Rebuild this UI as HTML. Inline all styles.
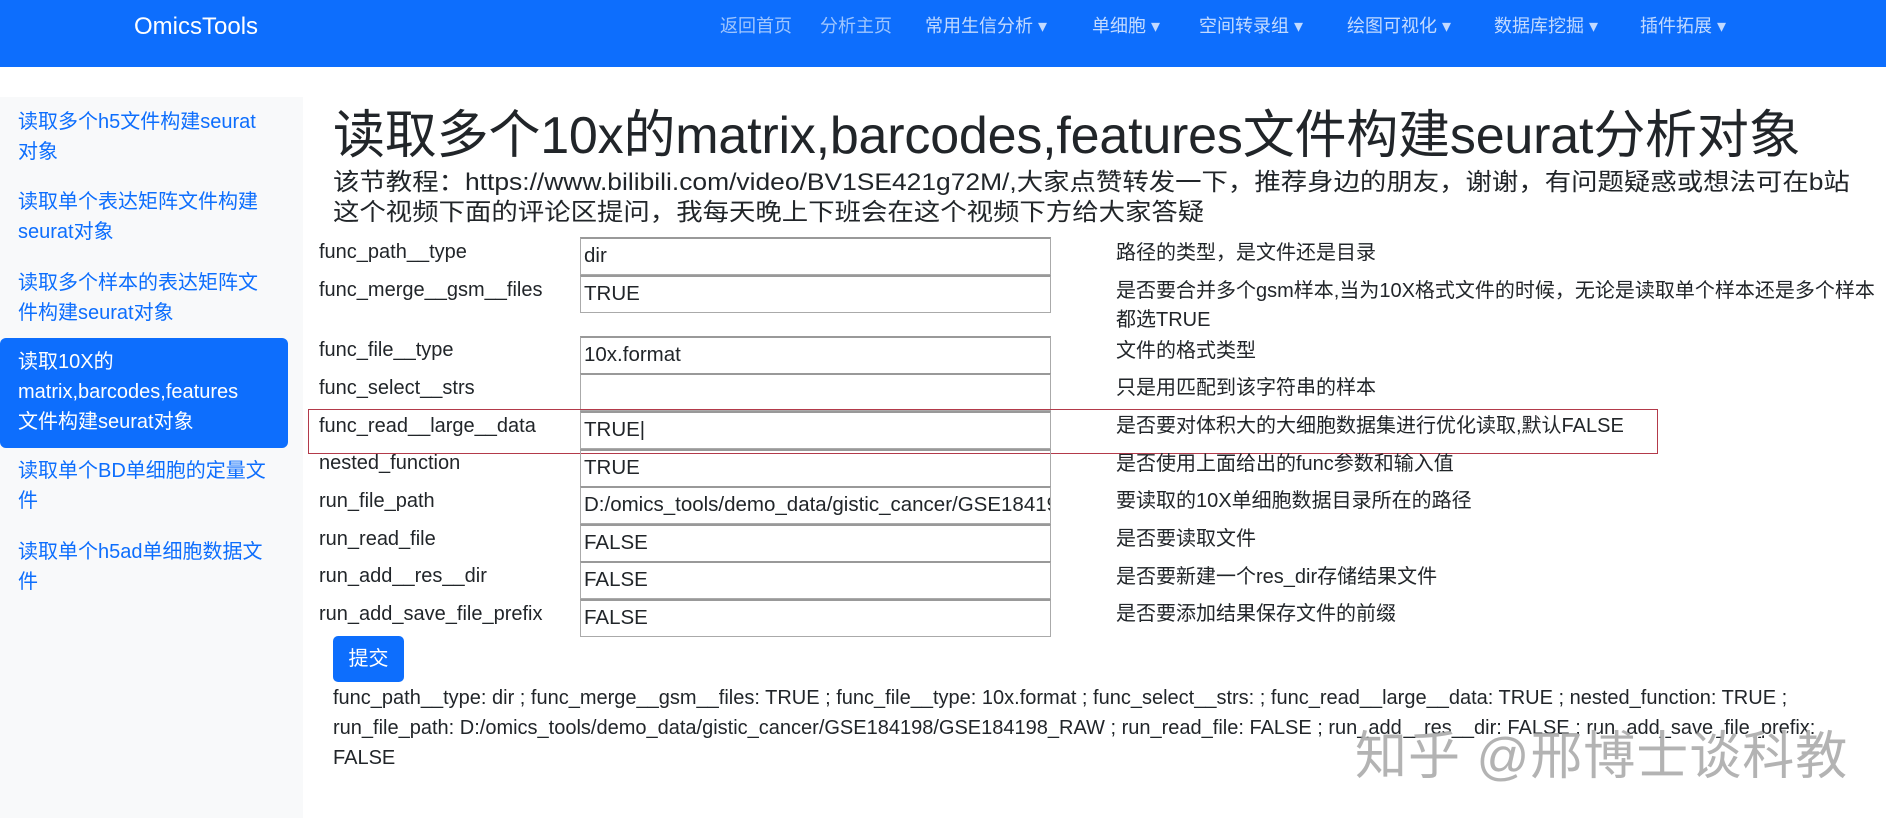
<!DOCTYPE html>
<html><head><meta charset="utf-8"><style>
*{margin:0;padding:0;box-sizing:border-box}
body{width:1886px;height:818px;overflow:hidden;background:#fff;font-family:"Liberation Sans","Noto Sans CJK SC",sans-serif;color:#212529;position:relative}
.nav{position:absolute;left:0;top:0;width:1886px;height:67px;background:#0d6efd}
.brand{position:absolute;left:134px;top:13px;color:#fff;font-size:24px}
.ni{position:absolute;top:12px;color:rgba(255,255,255,.6);font-size:18px}
.ni.w{color:rgba(255,255,255,.75)}
.side{position:absolute;left:0;top:97px;width:303px;height:721px;background:#f8f9fa}
.si{position:absolute;left:18px;color:#0d6efd;font-size:20px;line-height:30px;width:280px;white-space:nowrap}
.act{position:absolute;left:0;top:338px;width:288px;height:110px;background:#0d6efd;border-radius:6px}
.abs{position:absolute;white-space:nowrap}
h1{position:absolute;left:333px;top:93px;font-size:52px;font-weight:400;white-space:nowrap;letter-spacing:-0.2px}
.sub{position:absolute;left:333px;top:168px;font-size:24px;line-height:30px;white-space:nowrap;transform-origin:0 0;transform:scaleX(1.1)}
.lab{position:absolute;left:319px;font-size:20px}
.inp{position:absolute;left:580px;width:471px;height:38px;border:1px solid #aaa;border-top:2px solid #999;font-size:20.5px;line-height:34px;padding-left:3px;overflow:hidden;white-space:nowrap}
.desc{position:absolute;left:1116px;font-size:20px;line-height:29px;white-space:nowrap}
</style></head><body>
<div class="nav">
<div class="brand">OmicsTools</div>
<div class="ni" style="left:720px">返回首页</div>
<div class="ni" style="left:820px">分析主页</div>
<div class="ni w" style="left:925px">常用生信分析 ▾</div>
<div class="ni w" style="left:1092px">单细胞 ▾</div>
<div class="ni w" style="left:1199px">空间转录组 ▾</div>
<div class="ni w" style="left:1347px">绘图可视化 ▾</div>
<div class="ni w" style="left:1494px">数据库挖掘 ▾</div>
<div class="ni w" style="left:1640px">插件拓展 ▾</div>
</div>
<div class="side"></div>
<div class="act"></div>
<div class="si" style="top:107px">读取多个h5文件构建seurat<br>对象</div>
<div class="si" style="top:187px">读取单个表达矩阵文件构建<br>seurat对象</div>
<div class="si" style="top:268px">读取多个样本的表达矩阵文<br>件构建seurat对象</div>
<div class="si" style="top:347px;color:#fff">读取10X的<br>matrix,barcodes,features<br>文件构建seurat对象</div>
<div class="si" style="top:456px">读取单个BD单细胞的定量文<br>件</div>
<div class="si" style="top:537px">读取单个h5ad单细胞数据文<br>件</div>

<h1>读取多个10x的matrix,barcodes,features文件构建seurat分析对象</h1>
<div class="sub">该节教程：https://www.bilibili.com/video/BV1SE421g72M/,大家点赞转发一下，推荐身边的朋友，谢谢，有问题疑惑或想法可在b站<br>这个视频下面的评论区提问，我每天晚上下班会在这个视频下方给大家答疑</div>

<div class="lab" style="top:241px">func_path__type</div>
<div class="inp" style="top:237px">dir</div>
<div class="desc" style="top:239px">路径的类型，是文件还是目录</div>

<div class="lab" style="top:279px">func_merge__gsm__files</div>
<div class="inp" style="top:275px">TRUE</div>
<div class="desc" style="top:277px">是否要合并多个gsm样本,当为10X格式文件的时候，无论是读取单个样本还是多个样本<br>都选TRUE</div>

<div class="lab" style="top:339px">func_file__type</div>
<div class="inp" style="top:336px">10x.format</div>
<div class="desc" style="top:337px">文件的格式类型</div>

<div class="lab" style="top:377px">func_select__strs</div>
<div class="inp" style="top:373px"></div>
<div class="desc" style="top:374px">只是用匹配到该字符串的样本</div>

<div class="lab" style="top:415px">func_read__large__data</div>
<div class="inp" style="top:411px">TRUE|</div>
<div class="desc" style="top:412px">是否要对体积大的大细胞数据集进行优化读取,默认FALSE</div>
<div class="abs" style="left:308px;top:409px;width:1350px;height:45px;border:1px solid #b33a4a"></div>

<div class="lab" style="top:452px">nested_function</div>
<div class="inp" style="top:449px">TRUE</div>
<div class="desc" style="top:450px">是否使用上面给出的func参数和输入值</div>

<div class="lab" style="top:490px">run_file_path</div>
<div class="inp" style="top:486px">D:/omics_tools/demo_data/gistic_cancer/GSE184198/GSE184198_RAW</div>
<div class="desc" style="top:487px">要读取的10X单细胞数据目录所在的路径</div>

<div class="lab" style="top:528px">run_read_file</div>
<div class="inp" style="top:524px">FALSE</div>
<div class="desc" style="top:525px">是否要读取文件</div>

<div class="lab" style="top:565px">run_add__res__dir</div>
<div class="inp" style="top:561px">FALSE</div>
<div class="desc" style="top:563px">是否要新建一个res_dir存储结果文件</div>

<div class="lab" style="top:603px">run_add_save_file_prefix</div>
<div class="inp" style="top:599px">FALSE</div>
<div class="desc" style="top:600px">是否要添加结果保存文件的前缀</div>

<div class="abs" style="left:333px;top:636px;width:71px;height:46px;background:#0d6efd;border-radius:5px;color:#fff;font-size:20px;line-height:46px;text-align:center">提交</div>

<div class="abs" style="left:333px;top:683px;font-size:20px;line-height:30px">func_path__type: dir ; func_merge__gsm__files: TRUE ; func_file__type: 10x.format ; func_select__strs: ; func_read__large__data: TRUE ; nested_function: TRUE ;<br>run_file_path: D:/omics_tools/demo_data/gistic_cancer/GSE184198/GSE184198_RAW ; run_read_file: FALSE ; run_add__res__dir: FALSE ; run_add_save_file_prefix:<br>FALSE</div>

<div class="abs" style="left:1355px;top:714px;font-size:52px;letter-spacing:1px;color:rgba(160,160,160,.8);text-shadow:1px 1px 0 #fff">知乎 @邢博士谈科教</div>
</body></html>
